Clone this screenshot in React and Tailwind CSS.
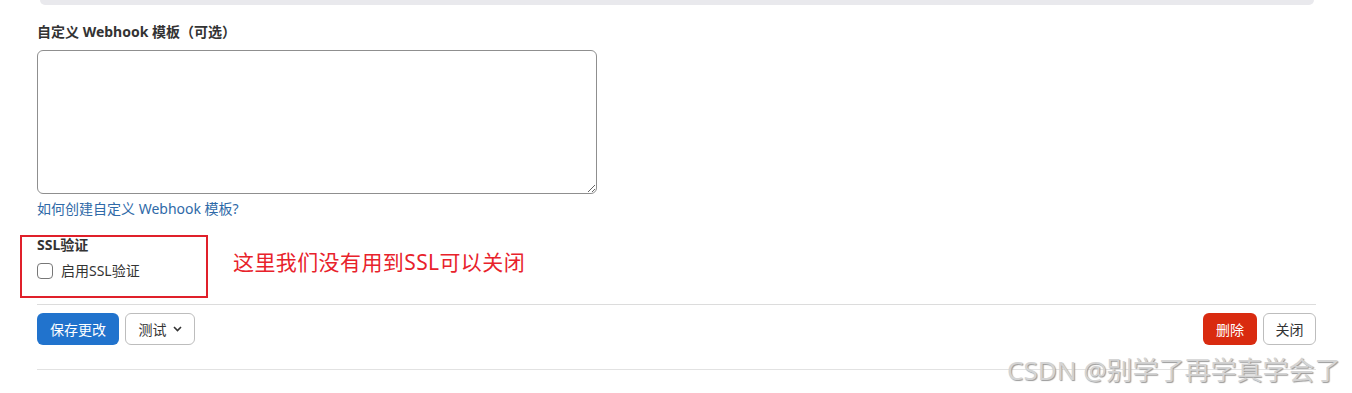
import React from 'react';

const cjk = { fontFamily: '"Noto Sans", "Noto Sans CJK SC", sans-serif' };

const App = () => {
  return (
    <div className="relative w-full h-[393px] overflow-hidden bg-white text-[#212529]" style={cjk}>
      {/* bottom edge of the card above */}
      <div className="mx-[40px] w-[1274px] h-[5px] bg-[#e9e9ed] rounded-b-[10px]" />

      <div className="ml-[37px] w-[1279px]">
        {/* Webhook template */}
        <label className="block mt-[18px] text-[14px] leading-[18px] font-bold text-[#333]">
          自定义 Webhook 模板（可选）
        </label>
        <textarea className="block mt-[9px] w-[560px] h-[144px] border border-[#8f8f8f] rounded-[6px] resize-y outline-none" />
        <a href="#" className="block mt-[6px] text-[14px] leading-[18px] text-[#2f6aa8]">
          如何创建自定义 Webhook 模板?
        </a>

        {/* SSL */}
        <div className="mt-[18px] text-[14px] leading-[18px] font-bold text-[#333]">SSL验证</div>
        <label className="mt-[8px] flex items-center gap-[8px] text-[14px] leading-[18px] text-[#333]">
          <span className="w-[16px] h-[16px] border border-[#777] rounded-[4px] bg-white" />
          启用SSL验证
        </label>

        <div className="mt-[24px] h-px bg-[#dcdcdc]" />

        {/* actions */}
        <div className="mt-[8px] flex items-center justify-between">
          <div className="flex items-center gap-[6px]">
            <button className="h-[32px] w-[82px] rounded-[6px] bg-[#2173cd] text-white text-[14px]">保存更改</button>
            <button className="h-[32px] w-[70px] rounded-[6px] border border-[#bdbdbd] bg-white text-[14px] text-[#333] flex items-center justify-center gap-[6px]">
              测试
              <svg width="9" height="6" viewBox="0 0 9 6" fill="none" stroke="#333" strokeWidth="1.6">
                <path d="M1 1l3.5 3.5L8 1" />
              </svg>
            </button>
          </div>
          <div className="flex items-center gap-[6px]">
            <button className="h-[32px] w-[54px] rounded-[6px] bg-[#d92b10] text-white text-[14px]">删除</button>
            <button className="h-[32px] w-[53px] rounded-[6px] border border-[#bdbdbd] bg-white text-[14px] text-[#333]">关闭</button>
          </div>
        </div>

        <div className="mt-[24px] h-px bg-[#e2e2e2]" />
      </div>

      {/* annotation */}
      <div className="absolute left-[20px] top-[235px] w-[188px] h-[63px] border-2 border-[#e0202a]" />
      <div className="absolute left-[233px] top-[247px] text-[21px] leading-[30px] tracking-[0.4px] text-[#e8222b]">
        这里我们没有用到SSL可以关闭
      </div>

      {/* watermark */}
      <div
        className="absolute left-[1007px] top-[354px] text-[26px] leading-[32px] text-[#d4d4d4] whitespace-nowrap"
        style={{ textShadow: '1px 1px 1px #9a9a9a' }}
      >
        CSDN @别学了再学真学会了
      </div>
    </div>
  );
};

export default App;
